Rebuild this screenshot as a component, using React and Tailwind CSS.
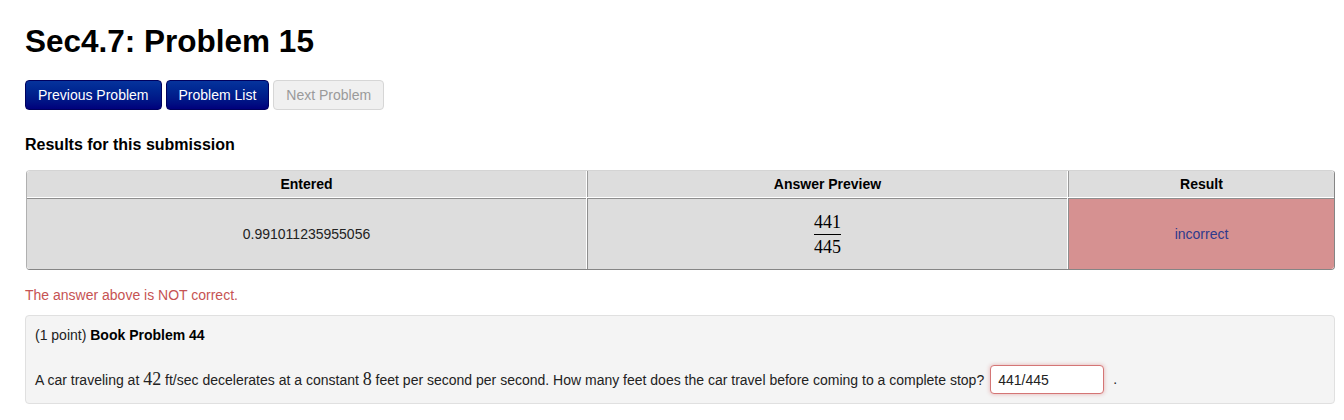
import React from 'react';

const NavButton = ({ children, disabled }) => (
  <button
    disabled={disabled}
    className={
      disabled
        ? 'h-[30px] px-[12px] rounded-[4px] border border-[#d6d6d6] bg-[#f0f0f0] text-[14px] text-[#9a9a9a]'
        : 'h-[30px] px-[12px] rounded-[4px] border border-[#00005e] bg-gradient-to-b from-[#06339c] to-[#00007c] text-[14px] text-white'
    }
  >
    {children}
  </button>
);

const Num = ({ children }) => (
  <span className="font-['Liberation_Serif',serif] text-[18px]">{children}</span>
);

export default function App() {
  return (
    <div className="min-h-screen bg-white pl-[25px] pr-[9px] pb-[16px] font-['Liberation_Sans',Arial,sans-serif] text-[14px] text-[#222]">
      <h1 className="pt-[22px] text-[31.5px] leading-[38px] font-bold text-black">Sec4.7: Problem 15</h1>

      <div className="mt-[20px] flex gap-[4px]">
        <NavButton>Previous Problem</NavButton>
        <NavButton>Problem List</NavButton>
        <NavButton disabled>Next Problem</NavButton>
      </div>

      <h2 className="mt-[25px] text-[16px] leading-[20px] font-bold text-black">Results for this submission</h2>

      {/* results table */}
      <div className="mt-[15px] ml-[1px] rounded-[4px] border border-t-[#d4d4d4] border-l-[#b0b0b0] border-r-[#858585] border-b-[#858585] bg-white overflow-hidden">
        <div className="grid grid-cols-[559px_480px_1fr] gap-[1px] bg-white">
          <div className="h-[26px] bg-[#dddddd] flex items-center justify-center font-bold text-black">Entered</div>
          <div className="h-[26px] bg-[#dddddd] border-l border-[#9a9a9a] flex items-center justify-center font-bold text-black">Answer Preview</div>
          <div className="h-[26px] bg-[#dddddd] border-l border-[#9a9a9a] flex items-center justify-center font-bold text-black">Result</div>

          <div className="h-[71px] bg-[#dddddd] border-t border-[#8e8e8e] flex items-center justify-center">0.991011235955056</div>
          <div className="h-[71px] bg-[#dddddd] border-t border-l border-[#8e8e8e] flex items-center justify-center">
            <div className="flex flex-col items-center font-['Liberation_Serif',serif] text-[18px] leading-[20px] text-black">
              <span className="px-[1px]">441</span>
              <span className="w-[27px] h-[1px] bg-black my-[2px]" />
              <span className="px-[1px]">445</span>
            </div>
          </div>
          <div className="h-[71px] bg-[#d69191] border-t border-l border-[#8e8e8e] flex items-center justify-center text-[#2e3a8c]">incorrect</div>
        </div>
      </div>

      <p className="mt-[15px] leading-[20px] text-[#c65353]">The answer above is NOT correct.</p>

      {/* problem body */}
      <div className="mt-[10px] rounded-[4px] border border-[#e0e0e0] bg-[#f4f4f4] px-[9px] py-[9px]">
        <p className="leading-[20px]">
          (1 point) <span className="font-bold text-black">Book Problem 44</span>
        </p>
        <div className="mt-[20px] flex items-center h-[29px]">
          <span>
            A car traveling at <Num>42</Num> ft/sec decelerates at a constant <Num>8</Num> feet per second per second. How many feet does the car travel before coming to a complete stop?
          </span>
          <input
            readOnly
            value="441/445"
            className="ml-[6px] w-[114px] h-[29px] rounded-[4px] border border-[#d47575] bg-white px-[7px] text-[14px] text-[#222] shadow-[0_0_4px_rgba(210,90,90,0.45)] outline-none"
          />
          <span className="ml-[9px]">.</span>
        </div>
      </div>
    </div>
  );
}
